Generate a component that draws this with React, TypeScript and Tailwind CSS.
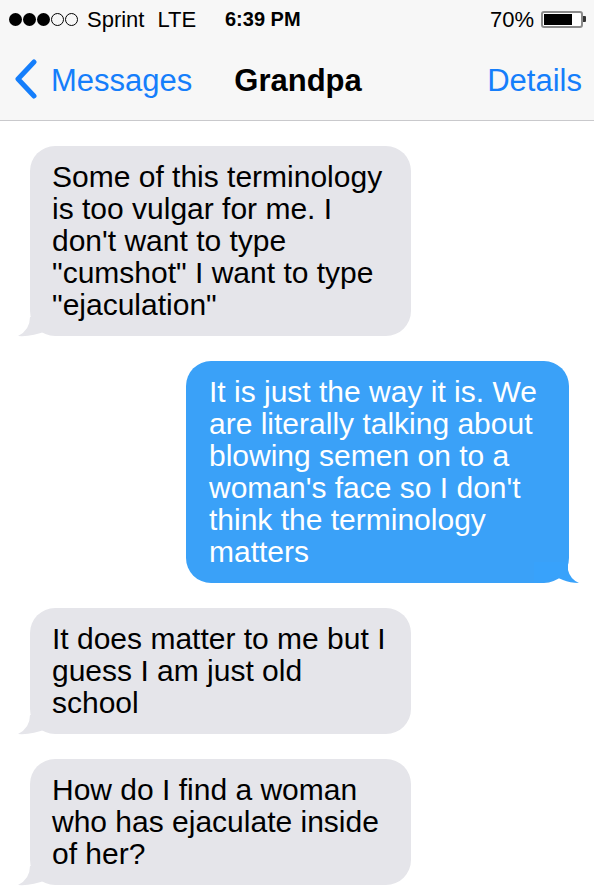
import React from 'react';

type Msg = { id: number; from: 'them' | 'me'; lines: string[] };

const messages: Msg[] = [
  {
    id: 1,
    from: 'them',
    lines: ['Some of this terminology', 'is too vulgar for me. I', "don't want to type", '"cumshot" I want to type', '"ejaculation"'],
  },
  {
    id: 2,
    from: 'me',
    lines: [
      'It is just the way it is. We',
      'are literally talking about',
      'blowing semen on to a',
      "woman's face so I don't",
      'think the terminology',
      'matters',
    ],
  },
  { id: 3, from: 'them', lines: ['It does matter to me but I', 'guess I am just old', 'school'] },
  { id: 4, from: 'them', lines: ['How do I find a woman', 'who has ejaculate inside', 'of her?'] },
];

function StatusBar() {
  return (
    <div className="h-[38px] flex items-center justify-between pl-[9px] pr-[8px] text-[22px] text-black">
      <div className="flex items-center">
        <div className="flex items-center gap-[1px]">
          <span className="w-[13px] h-[13px] rounded-full bg-black" />
          <span className="w-[13px] h-[13px] rounded-full bg-black" />
          <span className="w-[13px] h-[13px] rounded-full bg-black" />
          <span className="w-[13px] h-[13px] rounded-full border border-black" />
          <span className="w-[13px] h-[13px] rounded-full border border-black" />
        </div>
        <span className="ml-[9px]">Sprint</span>
        <span className="ml-[13px]">LTE</span>
      </div>
      <span className="absolute left-[225px] font-bold text-[20px]">6:39 PM</span>
      <div className="flex items-center">
        <span className="text-[22px]">70%</span>
        <div className="ml-[7px] flex items-center">
          <div className="w-[42px] h-[17px] rounded-[3px] border-2 border-[#8a8a8a] p-[1px] bg-white">
            <div className="h-full w-[28px] bg-black" />
          </div>
          <div className="w-[3px] h-[6px] bg-[#333] rounded-r-[1px]" />
        </div>
      </div>
    </div>
  );
}

function NavBar() {
  return (
    <div className="h-[83px] flex items-center pt-[5px] border-b border-[#c9c9cc]">
      <svg width="26" height="40" viewBox="0 0 26 40" className="ml-[13px] mr-[12px] -mt-[5px]">
        <path d="M21 3 L5 20 L21 37" fill="none" stroke="#157efb" strokeWidth="5" strokeLinecap="round" strokeLinejoin="round" />
      </svg>
      <span className="text-[31px] text-[#157efb]">Messages</span>
      <span className="ml-[42px] text-[31px] font-bold text-black">Grandpa</span>
      <span className="ml-auto mr-[12px] text-[31px] text-[#157efb]">Details</span>
    </div>
  );
}

function Bubble({ msg }: { msg: Msg }) {
  const mine = msg.from === 'me';
  return (
    <div className={mine ? 'flex justify-end pr-[25px]' : 'flex justify-start pl-[30px]'}>
      <div
        className={`relative rounded-[25px] py-[15px] text-[30px] leading-[32px] ${
          mine ? 'w-[383px] pl-[23px] pr-[20px] bg-[#3aa1f8] text-white' : 'w-[381px] pl-[22px] pr-[20px] bg-[#e5e5ea] text-black'
        }`}
      >
        {msg.lines.map((line, i) => (
          <div key={i} className="whitespace-nowrap">
            {line}
          </div>
        ))}
        {mine ? (
          <svg width="45" height="21" viewBox="0 0 45 21" className="absolute right-[-10px] bottom-0">
            <path d="M34 0 L34 8 Q36 17 45 21 Q36 21 29 18 Q22 14 15 18 Q11 21 0 21 L0 0 Z" fill="#38a2fb" />
          </svg>
        ) : (
          <svg width="30" height="20" viewBox="0 0 30 20" className="absolute left-[-12px] bottom-[-1px]">
            <path d="M12 0 Q12 13 0 19 Q14 20 28 14 L28 0 Z" fill="#e5e5ea" />
          </svg>
        )}
      </div>
    </div>
  );
}

export default function App() {
  return (
    <div className="relative w-[594px] h-[894px] overflow-hidden bg-white font-['Liberation_Sans',Arial,sans-serif]">
      <div className="bg-[#f7f7f7]">
        <StatusBar />
        <NavBar />
      </div>
      <div className="flex flex-col gap-[25px] pt-[25px]">
        {messages.map((m) => (
          <Bubble key={m.id} msg={m} />
        ))}
      </div>
    </div>
  );
}
